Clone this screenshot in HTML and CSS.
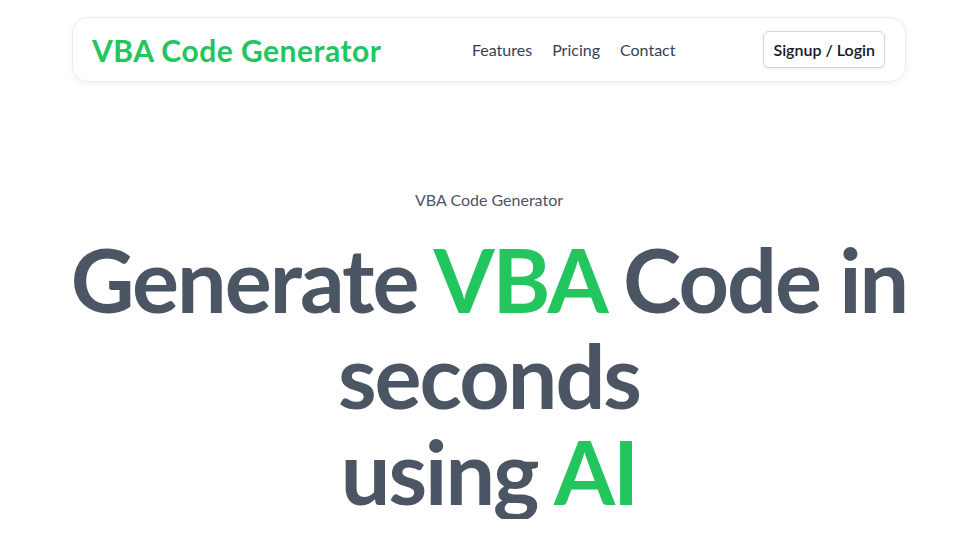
FILE: index.html
```html
<!DOCTYPE html>
<html lang="en">
<head>
<meta charset="utf-8">
<title>VBA Code Generator</title>
<link rel="stylesheet" href="styles.css">
</head>
<body>
<div class="page">
  <header class="nav">
    <a class="logo" href="#">VBA Code Generator</a>
    <nav class="links">
      <a href="#">Features</a>
      <a href="#">Pricing</a>
      <a href="#">Contact</a>
    </nav>
    <button class="login">Signup / Login</button>
  </header>
  <section class="hero">
    <p class="eyebrow">VBA Code Generator</p>
    <h1 class="title">Generate <span class="accent">VBA</span> Code in<br>seconds<br>using <span class="accent">AI</span></h1>
  </section>
</div>
</body>
</html>
```
FILE: styles.css
```css
* { box-sizing: border-box; }
html, body { margin: 0; padding: 0; background: #fff; }
body { font-family: "Lato", "Noto Sans", sans-serif; color: #4b5563; overflow: hidden; }
.page { width: 834px; margin-left: 72px; padding-top: 17px; }
.nav {
  height: 65px;
  border: 1px solid #ececec;
  border-radius: 16px;
  box-shadow: 0 2px 6px rgba(0,0,0,0.06);
  display: flex;
  align-items: center;
  padding: 0 20px 0 19px;
}
.logo {
  font-weight: 700;
  font-size: 30px;
  color: #22c55e;
  text-decoration: none;
  letter-spacing: 0.5px;
}
.links { margin-left: auto; display: flex; gap: 20px; }
.links a { color: #374151; text-decoration: none; font-size: 16px; }
.login {
  margin-left: 88px;
  font-family: inherit;
  font-size: 16px;
  font-weight: 600;
  color: #111827;
  background: #fff;
  border: 1px solid #d1d5db;
  border-radius: 6px;
  height: 37px;
  padding: 0 9px;
  box-shadow: 0 1px 2px rgba(0,0,0,0.08);
}
.hero { text-align: center; padding-top: 108px; }
.eyebrow { margin: 0; font-size: 16px; color: #4b5563; line-height: 20px; }
.title {
  margin: 21px -20px 0;
  font-size: 88px;
  line-height: 96px;
  font-weight: 700;
  color: #4b5563;
  letter-spacing: -2px;
  white-space: nowrap;
}
.accent { color: #22c55e; }
```
